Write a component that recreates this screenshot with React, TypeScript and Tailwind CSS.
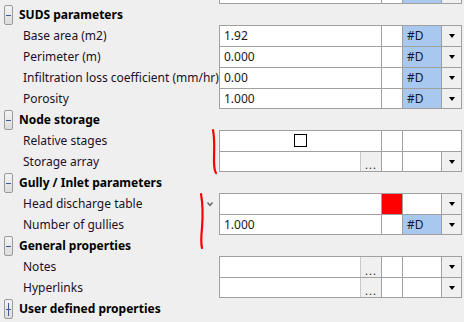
import React from "react";

type Cell = {
  value?: string;
  mid?: "red";
  tag?: "blue" | "white" | "wide";
  ellipsis?: boolean;
  checkbox?: boolean;
};

type Group = {
  title: string;
  open: boolean;
  rows: { label: string; cell: Cell }[];
};

const groups: Group[] = [
  {
    title: "SUDS parameters",
    open: true,
    rows: [
      { label: "Base area (m2)", cell: { value: "1.92", tag: "blue" } },
      { label: "Perimeter (m)", cell: { value: "0.000", tag: "blue" } },
      { label: "Infiltration loss coefficient (mm/hr)", cell: { value: "0.00", tag: "blue" } },
      { label: "Porosity", cell: { value: "1.000", tag: "blue" } },
    ],
  },
  {
    title: "Node storage",
    open: true,
    rows: [
      { label: "Relative stages", cell: { checkbox: true, tag: "wide" } },
      { label: "Storage array", cell: { ellipsis: true, tag: "white" } },
    ],
  },
  {
    title: "Gully / Inlet parameters",
    open: true,
    rows: [
      { label: "Head discharge table", cell: { mid: "red", tag: "white" } },
      { label: "Number of gullies", cell: { value: "1.000", tag: "blue" } },
    ],
  },
  {
    title: "General properties",
    open: true,
    rows: [
      { label: "Notes", cell: { ellipsis: true, tag: "white" } },
      { label: "Hyperlinks", cell: { ellipsis: true, tag: "white" } },
    ],
  },
  { title: "User defined properties", open: false, rows: [] },
];

function DropButton() {
  return (
    <div className="w-[21px] h-full border-l border-r border-[#a0a0a0] bg-[#f0f0f0] flex items-center justify-center">
      <div className="w-0 h-0 border-l-[3px] border-r-[3px] border-t-[4px] border-l-transparent border-r-transparent border-t-black" />
    </div>
  );
}

function Toggle({ open }: { open: boolean }) {
  return (
    <div className="relative w-[9px] h-[20px] rounded-[2px] border border-[#9a9a9a] bg-gradient-to-b from-[#f4f4f4] to-[#dcdcdc]">
      <div className="absolute left-[1px] top-[9px] w-[5px] h-px bg-[#3a5a9a]" />
      {!open && <div className="absolute left-[3px] top-[3px] w-px h-[13px] bg-[#3a5a9a]" />}
    </div>
  );
}

function GridRow({ label, cell, last }: { label: string; cell: Cell; last: boolean }) {
  return (
    <div className="flex h-[21px]">
      <div className="w-[219px] pl-[23px] overflow-hidden whitespace-nowrap flex items-center text-[#1c1028]">
        {label}
      </div>
      <div className={`flex border-t border-[#a0a0a0] ${last ? "border-b" : ""}`}>
        <div className="relative w-[162px] border-l border-[#a0a0a0] bg-white flex items-center pl-[4px] text-[#1a1a1a]">
          {cell.value}
          {cell.checkbox && (
            <div className="absolute left-[74px] top-[3px] w-[13px] h-[13px] border border-black bg-white" />
          )}
          {cell.ellipsis && (
            <div className="absolute right-0 top-0 bottom-0 w-[21px] border-l border-[#c8c8c8] bg-[#f0f0f0] flex items-end justify-center pb-[1px] text-[11px] leading-none tracking-[1px]">
              ...
            </div>
          )}
        </div>
        <div className={`w-[21px] border-l border-[#a0a0a0] ${cell.mid === "red" ? "bg-[#ff0000]" : "bg-white"}`} />
        {cell.tag === "wide" ? (
          <div className="w-[60px] border-l border-r border-[#a0a0a0] bg-white" />
        ) : (
          <>
            <div
              className={`w-[39px] border-l border-[#a0a0a0] flex items-center pl-[4px] text-[#101830] ${
                cell.tag === "blue" ? "bg-[#a8c8f0]" : "bg-white"
              }`}
            >
              {cell.tag === "blue" ? "#D" : ""}
            </div>
            <DropButton />
          </>
        )}
      </div>
    </div>
  );
}

export default function App() {
  return (
    <div
      className="relative w-[464px] h-[322px] overflow-hidden bg-[#efefef] text-[12px]"
      style={{ fontFamily: '"Noto Sans", "Open Sans", sans-serif' }}
    >
      {/* tail of the row above */}
      <div className="flex h-[4px]">
        <div className="w-[219px]" />
        <div className="flex border-b border-[#a0a0a0]">
          <div className="w-[162px] border-l border-[#a0a0a0] bg-white" />
          <div className="w-[21px] border-l border-[#a0a0a0] bg-white" />
          <div className="w-[39px] border-l border-[#a0a0a0] bg-[#a8c8f0]" />
          <div className="w-[21px] border-l border-r border-[#a0a0a0] bg-[#f0f0f0]" />
        </div>
      </div>

      {groups.map((g) => (
        <div key={g.title}>
          <div className="flex items-center h-[21px] pl-[4px]">
            <Toggle open={g.open} />
            <span className="ml-[6px] font-bold text-black">{g.title}</span>
          </div>
          {g.rows.map((r, i) => (
            <GridRow key={r.label} label={r.label} cell={r.cell} last={i === g.rows.length - 1} />
          ))}
        </div>
      ))}

      {/* hand-drawn annotation marks */}
      <svg className="absolute left-0 top-0 pointer-events-none" width="464" height="322">
        <path d="M213 130 C215 140 214 152 214 160 C214 166 214 170 216 173" stroke="#ff0000" strokeWidth="2.2" fill="none" strokeLinecap="round" />
        <path d="M201 194 C203 205 203 215 202 228 C201 238 201 244 202 248" stroke="#ff0000" strokeWidth="2.2" fill="none" strokeLinecap="round" />
        <path d="M207.5 202.5 L210 205.5 L212.5 202.5" stroke="#606060" strokeWidth="1.4" fill="none" />
      </svg>
    </div>
  );
}
